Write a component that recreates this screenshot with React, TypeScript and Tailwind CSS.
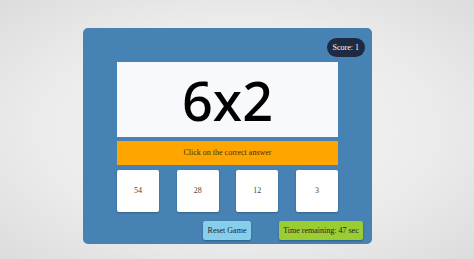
export default function App() {
  const answers = [54, 28, 12, 3];
  return (
    <div className="h-[259px] w-[474px] overflow-hidden bg-[radial-gradient(ellipse_at_center,#f6f6f6_0%,#ebebeb_60%,#dcdcdc_100%)] pt-[28px] pl-[83px] font-['Liberation_Serif',serif]">
      <div className="flex h-[216px] w-[289px] flex-col rounded-[5px] bg-[#4682b4]">
        <div className="flex justify-end pr-[7px] pt-[10px]">
          <div className="flex h-[19px] items-center rounded-full bg-[#1e2a42] px-[6px] text-[8px] text-white">
            Score: 1
          </div>
        </div>

        <div className="mx-[34px] mt-[5px] flex flex-col">
          <div className="flex h-[75px] items-center justify-center bg-[#f8f9fc]">
            <span className="font-['Comic_Sans_MS','Noto_Sans',sans-serif] text-[54px] font-medium leading-none text-black">
              6x2
            </span>
          </div>

          <div className="mt-[4px] flex h-[24px] items-center justify-center bg-[#ffa500] text-[8px] text-[#4a2f10]">
            Click on the correct answer
          </div>

          <div className="mt-[5px] flex justify-between">
            {answers.map((n) => (
              <div
                key={n}
                className="flex h-[42px] w-[42px] items-center justify-center rounded-[2px] bg-white text-[8px] text-[#444] shadow-[0_1px_2px_rgba(0,0,0,0.25)]"
              >
                {n}
              </div>
            ))}
          </div>
        </div>

        <div className="mt-[9px] flex justify-end gap-[28px] pr-[9px]">
          <div className="flex h-[19px] w-[48px] items-center justify-center rounded-[2px] bg-[#87ceeb] text-[8px] text-[#222] shadow-[0_1px_2px_rgba(0,0,0,0.3)]">
            Reset Game
          </div>
          <div className="flex h-[19px] w-[84px] items-center justify-center rounded-[2px] bg-[#9acd32] text-[8px] text-[#222] shadow-[0_1px_2px_rgba(0,0,0,0.3)]">
            Time remaining: 47 sec
          </div>
        </div>
      </div>
    </div>
  );
}
